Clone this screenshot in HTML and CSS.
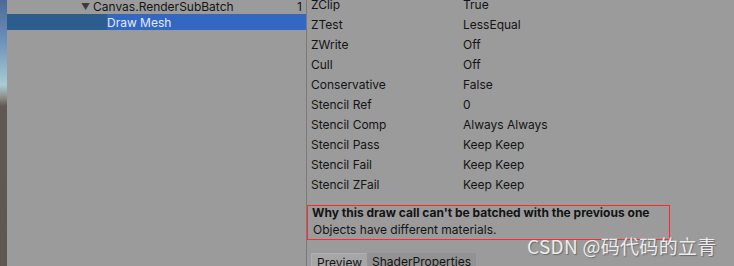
FILE: index.html
```html
<!DOCTYPE html>
<html>
<head>
<meta charset="utf-8">
<link rel="stylesheet" href="styles.css">
</head>
<body>
<div class="app">
  <div class="strip"></div>
  <div class="tree">
    <div class="node">
      <span class="caret">&#9660;</span><span class="name">Canvas.RenderSubBatch</span><span class="count">1</span>
    </div>
    <div class="node selected">
      <span class="indent-dark"></span><span class="name">Draw Mesh</span>
    </div>
  </div>
  <div class="sep"></div>
  <div class="detail">
    <div class="props">
      <div class="row"><span class="key">ZClip</span><span class="val">True</span></div>
      <div class="row"><span class="key">ZTest</span><span class="val">LessEqual</span></div>
      <div class="row"><span class="key">ZWrite</span><span class="val">Off</span></div>
      <div class="row"><span class="key">Cull</span><span class="val">Off</span></div>
      <div class="row"><span class="key">Conservative</span><span class="val">False</span></div>
      <div class="row"><span class="key">Stencil Ref</span><span class="val">0</span></div>
      <div class="row"><span class="key">Stencil Comp</span><span class="val">Always Always</span></div>
      <div class="row"><span class="key">Stencil Pass</span><span class="val">Keep Keep</span></div>
      <div class="row"><span class="key">Stencil Fail</span><span class="val">Keep Keep</span></div>
      <div class="row"><span class="key">Stencil ZFail</span><span class="val">Keep Keep</span></div>
    </div>
    <div class="reason">
      <div class="reason-title">Why this draw call can't be batched with the previous one</div>
      <div class="reason-text">Objects have different materials.</div>
    </div>
    <div class="tabs">
      <div class="tab active">Preview</div>
      <div class="tab">ShaderProperties</div>
    </div>
  </div>
  <div class="watermark">CSDN @码代码的立青</div>
</div>
</body>
</html>
```
FILE: styles.css
```css
html, body {
  margin: 0;
  padding: 0;
  width: 734px;
  height: 266px;
  overflow: hidden;
  background: #9b9b9b;
  font-family: Inter, "Noto Sans", "Liberation Sans", sans-serif;
  font-size: 12px;
  color: #141414;
}

.app {
  position: relative;
  display: flex;
  width: 734px;
  height: 266px;
}

.strip {
  width: 7px;
  flex: none;
  background: linear-gradient(to bottom, #4c6a98 0px, #6d8fb8 40px, #a9ccd4 85px, #8d8a84 98px, #605853 106px, #5f5753 266px);
}

.tree {
  width: 299px;
  flex: none;
  display: flex;
  flex-direction: column;
  margin-top: -2px;
}

.node {
  height: 16px;
  display: flex;
  align-items: center;
  white-space: nowrap;
}

.caret {
  font-size: 9px;
  color: #3c3c3c;
  margin-left: 74px;
  width: 12px;
}

.count {
  margin-left: auto;
  margin-right: 4px;
}

.node.selected {
  background: #3367c2;
  color: #e4ecf8;
}

.indent-dark {
  width: 100px;
  align-self: stretch;
  background: #2d5c8f;
}

.sep {
  width: 1px;
  flex: none;
  background: #7a7a7a;
}

.detail {
  flex: 1;
  display: flex;
  flex-direction: column;
}

.props {
  margin-top: -6px;
  padding-left: 4px;
}

.row {
  height: 20px;
  display: flex;
  align-items: center;
  white-space: nowrap;
}

.key {
  width: 152px;
}

.reason {
  margin-top: 11px;
  width: 357px;
  height: 35px;
  border: 1px solid #ff2a2a;
  display: flex;
  flex-direction: column;
  padding-left: 4px;
}

.reason-title {
  font-weight: 700;
  height: 16px;
  line-height: 16px;
  margin-top: -1px;
}

.reason-text {
  height: 18px;
  line-height: 18px;
  padding-left: 1px;
}

.tabs {
  display: flex;
  margin-top: 13px;
  margin-left: 4px;
}

.tab {
  height: 18px;
  padding: 0 5px;
  line-height: 18px;
  background: #929292;
  white-space: nowrap;
}

.tab.active {
  background: #a6a6a6;
  border-top: 1px solid #b0b0b0;
  border-left: 1px solid #b0b0b0;
}

.watermark {
  position: absolute;
  left: 527px;
  top: 232px;
  font-family: "Noto Sans CJK SC", "Noto Sans", sans-serif;
  font-size: 19px;
  letter-spacing: 0.3px;
  color: #ececec;
  text-shadow: 1px 1px 1px #6a6a6a;
  white-space: nowrap;
}
```
